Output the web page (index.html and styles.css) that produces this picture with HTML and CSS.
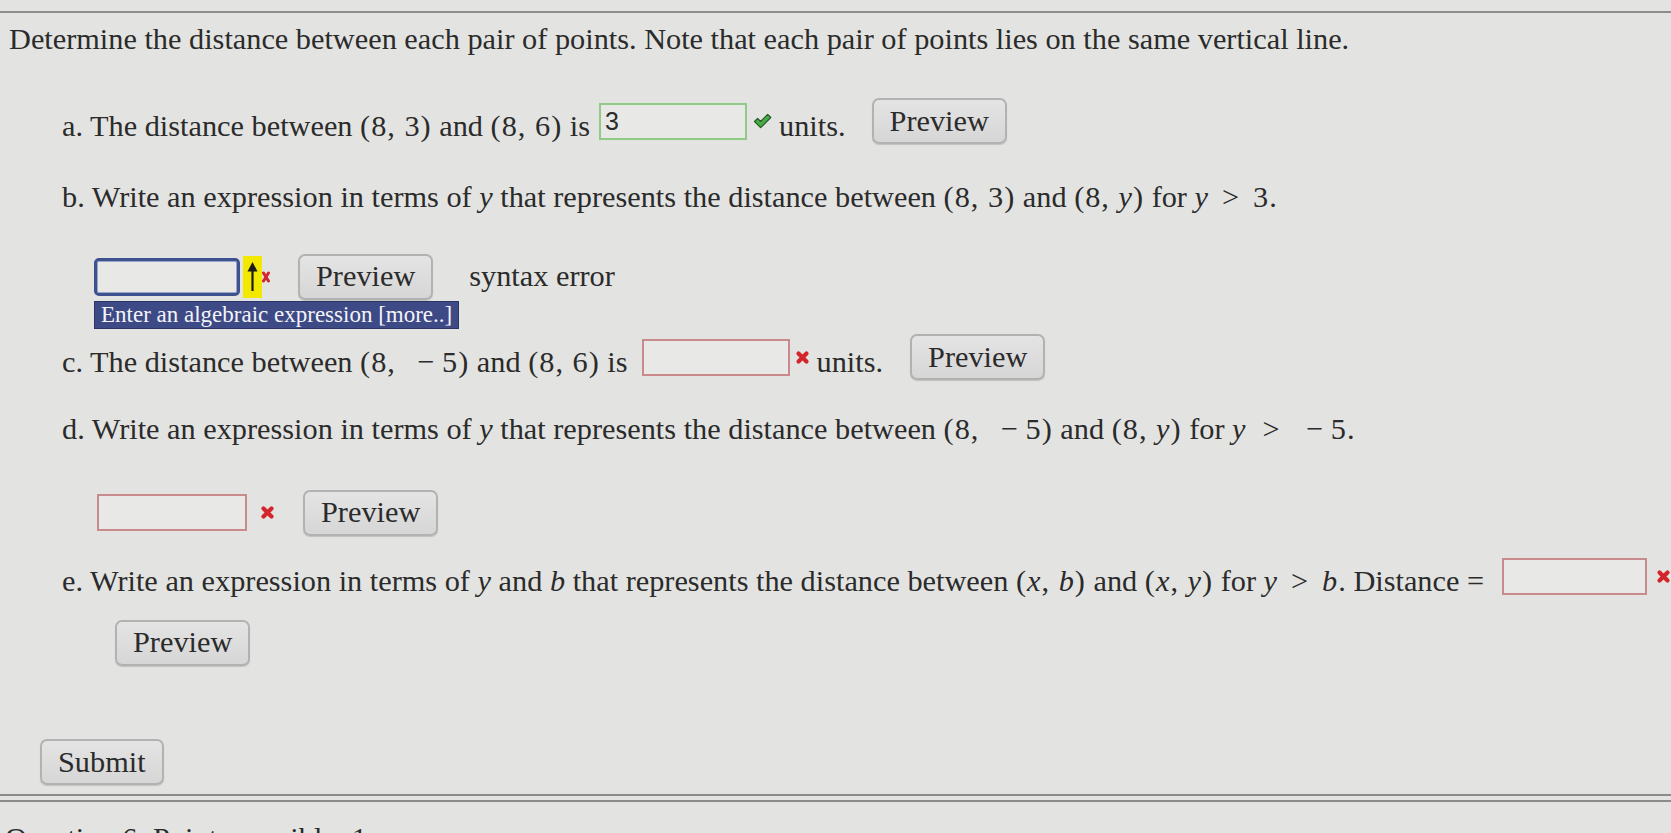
FILE: index.html
```html
<!DOCTYPE html>
<html lang="en">
<head>
<meta charset="utf-8">
<title>Distance between points</title>
<link rel="stylesheet" href="styles.css">
</head>
<body>
<div class="page">
  <div class="topline"></div>
  <p class="intro">Determine the distance between each pair of points. Note that each pair of points lies on the same vertical line.</p>

  <div class="row row-a">
    <span class="txt low">a. The distance between <span class="m">(8, 3)</span> and <span class="m">(8, 6)</span> is</span>
    <span class="ans ok">3</span>
    <svg class="mark check" viewBox="0 0 20 17" width="19" height="16"><path d="M1.5 9 L4.8 5.8 L8 9 L15.5 1.5 L18.8 4.8 L8 15.6 Z" fill="#46b046" stroke="#2a5a2a" stroke-width="1.3" stroke-linejoin="round"/></svg>
    <span class="txt low units">units.</span>
    <button class="btn prev-a">Preview</button>
  </div>

  <p class="line line-b">b. Write an expression in terms of <i class="v">y</i> that represents the distance between <span class="m">(8, 3)</span> and <span class="m">(8, <i class="v">y</i>)</span> for <span class="m"><i class="v">y</i><span class="s14"></span>&gt;<span class="s14"></span>3</span>.</p>

  <div class="row row-input row-b">
    <span class="ans focus"></span>
    <span class="arrow"><svg viewBox="0 0 19 42" width="19" height="42"><path d="M9.5 35 L9.5 12" stroke="#1b1b1b" stroke-width="2.2"/><path d="M4.5 15.5 L9.5 6 L14.5 15.5 Z" fill="#1b1b1b"/></svg></span>
    <svg class="mark xsmall" viewBox="0 0 8 14" width="8" height="14"><path d="M1.5 3 L6.5 11 M6.5 3 L1.5 11" stroke="#d4262b" stroke-width="3" stroke-linecap="round"/></svg>
    <button class="btn prev-b">Preview</button>
    <span class="txt err">syntax error</span>
    <div class="tip">Enter an algebraic expression [more..]</div>
  </div>

  <div class="row row-c">
    <span class="txt low">c. The distance between <span class="m">(8,<span class="s19"></span>&minus;<span class="s8"></span>5)</span> and <span class="m">(8, 6)</span> is</span>
    <span class="ans bad ans-c"></span>
    <svg class="mark cross" viewBox="0 0 15 15" width="15" height="15"><path d="M3.5 3.5 L11.5 11.5 M11.5 3.5 L3.5 11.5" stroke="#d3252a" stroke-width="4.2" stroke-linecap="round"/></svg>
    <span class="txt low units-c">units.</span>
    <button class="btn prev-c">Preview</button>
  </div>

  <p class="line line-d">d. Write an expression in terms of <i class="v">y</i> that represents the distance between <span class="m">(8,<span class="s19"></span>&minus;<span class="s8"></span>5)</span> and <span class="m">(8, <i class="v">y</i>)</span> for <span class="m"><i class="v">y</i><span class="s16"></span>&gt;<span class="s26"></span>&minus;<span class="s8"></span>5</span>.</p>

  <div class="row row-input row-d">
    <span class="ans bad ans-d"></span>
    <svg class="mark cross cross-d" viewBox="0 0 15 15" width="15" height="15"><path d="M3.5 3.5 L11.5 11.5 M11.5 3.5 L3.5 11.5" stroke="#d3252a" stroke-width="4.2" stroke-linecap="round"/></svg>
    <button class="btn prev-d">Preview</button>
  </div>

  <div class="row row-e">
    <span class="txt low">e. Write an expression in terms of <i class="v">y</i> and <i class="v">b</i> that represents the distance between <span class="m">(<i class="v">x</i>, <i class="v">b</i>)</span> and <span class="m">(<i class="v">x</i>, <i class="v">y</i>)</span> for <span class="m"><i class="v">y</i><span class="s14"></span>&gt;<span class="s14"></span><i class="v">b</i></span>. Distance =</span>
    <span class="ans bad ans-e"></span>
    <svg class="mark cross cross-e" viewBox="0 0 15 15" width="15" height="15"><path d="M3.5 3.5 L11.5 11.5 M11.5 3.5 L3.5 11.5" stroke="#d3252a" stroke-width="4.2" stroke-linecap="round"/></svg>
  </div>

  <div class="row row-pe">
    <button class="btn">Preview</button>
  </div>

  <div class="row row-submit">
    <button class="btn">Submit</button>
  </div>

  <div class="dline"></div>
  <p class="next">Question 6: Points possible: 1</p>
</div>
</body>
</html>
```

FILE: styles.css
```css
html, body {
  margin: 0;
  padding: 0;
}
body {
  background: #e3e4e2;
  color: #2b2b2b;
  font-family: "Liberation Serif", "Times New Roman", serif;
  font-size: 30.3px;
  overflow: hidden;
  height: 833px;
}
.page {
  width: 1671px;
  overflow: hidden;
}
.topline {
  margin-top: 11px;
  height: 2px;
  background: #8c8d8c;
}
.intro {
  margin: 9px 0 0 9px;
  line-height: 34px;
  white-space: nowrap;
}
.line {
  margin: 0;
  padding-left: 62px;
  line-height: 34px;
  white-space: nowrap;
}
.v {
  font-style: italic;
}
.m {
  letter-spacing: 1px;
}
.s8, .s14, .s16, .s19, .s26 {
  display: inline-block;
}
.s8 { width: 7px; }
.s14 { width: 13px; }
.s16 { width: 16px; }
.s19 { width: 21px; }
.s26 { width: 25px; }
.row {
  display: flex;
  align-items: center;
  white-space: nowrap;
}
.low {
  padding-top: 10px;
}
.row-a {
  margin-top: 41px;
  height: 48px;
  padding-left: 62px;
}
.line-b {
  margin-top: 35px;
}
.row-b {
  margin-top: 40px;
  height: 45px;
  padding-left: 94px;
  position: relative;
}
.row-c {
  margin-top: 35px;
  height: 46px;
  padding-left: 62px;
}
.line-d {
  margin-top: 32px;
}
.row-d {
  margin-top: 44px;
  height: 45px;
  padding-left: 97px;
}
.row-e {
  margin-top: 21px;
  height: 40px;
  padding-left: 62px;
}
.row-pe {
  margin-top: 24px;
  height: 45px;
  padding-left: 115px;
}
.row-submit {
  margin-top: 74px;
  height: 46px;
  padding-left: 40px;
}
.ans {
  display: inline-block;
  box-sizing: border-box;
  width: 148px;
  height: 37px;
  margin-left: 9px;
  background: #e8e9e7;
  border: 2px solid #8fca86;
  font-family: "Liberation Sans", Arial, sans-serif;
  font-size: 25px;
  line-height: 33px;
  padding-left: 4px;
  color: #2b2b2b;
}
.ans.bad {
  border: 2px solid #c98a8c;
}
.ans-c {
  margin-left: 14px;
}
.ans-d {
  margin-left: 0;
  width: 150px;
}
.ans-e {
  margin-left: 18px;
}
.ans.focus {
  margin-left: 0;
  width: 146px;
  height: 38px;
  border: 3px solid #3e5290;
  border-radius: 5px;
  box-shadow: inset 0 0 0 1px #9aa6c8;
}
.mark {
  flex: none;
}
.check {
  margin-left: 6px;
}
.units {
  margin-left: 7px;
}
.cross {
  margin-left: 5px;
}
.units-c {
  margin-left: 7px;
}
.cross-d {
  margin-left: 13px;
}
.cross-e {
  margin-left: 9px;
}
.arrow {
  display: inline-block;
  width: 19px;
  height: 42px;
  margin-left: 3px;
  background: #f3e800;
}
.arrow svg {
  display: block;
}
.xsmall {
  margin-left: 0;
}
.btn {
  box-sizing: border-box;
  height: 46px;
  padding: 0 16px;
  font-family: "Liberation Serif", "Times New Roman", serif;
  font-size: 30.3px;
  color: #2b2b2b;
  background: linear-gradient(#e4e4e4, #d6d6d6);
  border: 2px solid #b2b2b2;
  border-radius: 7px;
  box-shadow: 0 1px 1px rgba(0,0,0,0.15);
}
.prev-a {
  margin-left: 26px;
}
.prev-b {
  margin-left: 28px;
}
.err {
  margin-left: 36px;
}
.prev-c {
  margin-left: 27px;
}
.prev-d {
  margin-left: 28px;
}
.tip {
  position: absolute;
  left: 94px;
  top: 47px;
  height: 26px;
  padding: 0 6px;
  background: #3d4a85;
  border: 1px solid #2c3566;
  color: #f4f4f8;
  font-size: 23px;
  line-height: 26px;
}
.dline {
  margin-top: 9px;
  border-top: 2px solid #8a8b8a;
  border-bottom: 2px solid #8a8b8a;
  height: 4px;
}
.next {
  margin: 19px 0 0 5px;
  line-height: 34px;
  white-space: nowrap;
}
```
